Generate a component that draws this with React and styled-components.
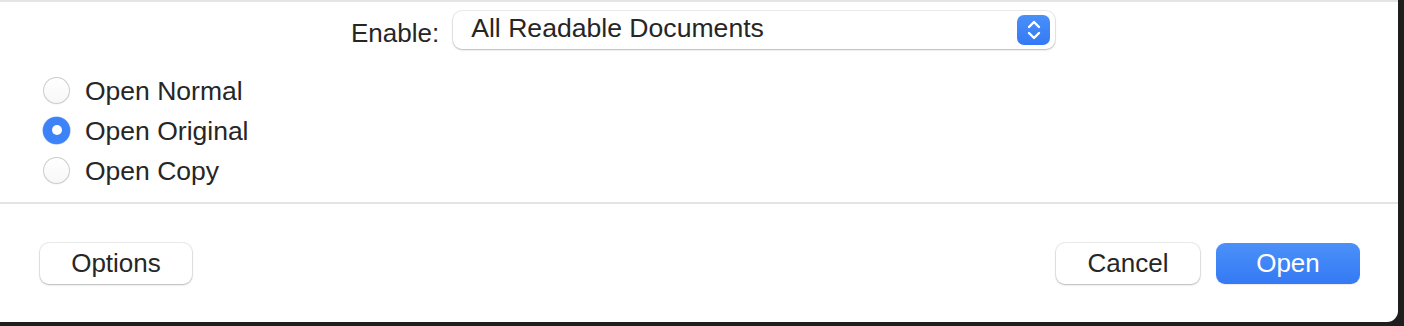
import React, { useState } from 'react';
import styled, { createGlobalStyle } from 'styled-components';

const GlobalStyle = createGlobalStyle`
  html, body {
    margin: 0;
    padding: 0;
    background: #1e1e1e;
  }
  body {
    font-family: "Liberation Sans", Arial, sans-serif;
    color: #262626;
  }
`;

const Sheet = styled.div`
  width: 1398px;
  height: 322px;
  background: #ffffff;
  border-top: 2px solid #e4e4e4;
  border-bottom-right-radius: 11px;
  box-sizing: border-box;
  display: flex;
  flex-direction: column;
  overflow: hidden;
`;

const FormatRow = styled.div`
  display: flex;
  align-items: center;
  gap: 14px;
  padding-left: 351px;
  margin-top: 9px;
  height: 38px;
`;

const Label = styled.span`
  font-size: 26px;
  line-height: 26px;
  margin-top: 6px;
`;

const Popup = styled.div`
  width: 602px;
  height: 38px;
  box-sizing: border-box;
  border-radius: 9px;
  background: #fff;
  box-shadow: 0 0 0 1px rgba(0, 0, 0, 0.07), 0 1px 2px rgba(0, 0, 0, 0.22);
  display: flex;
  align-items: center;
  justify-content: space-between;
  padding: 0 5px 0 18px;
  font-size: 26.6px;
`;

const PopupText = styled.span`
  margin-top: -3px;
`;

const Stepper = styled.div`
  width: 33px;
  height: 30px;
  border-radius: 7px;
  background: linear-gradient(#4a90f8, #3479f5);
  display: flex;
  align-items: center;
  justify-content: center;
`;

const Choices = styled.div`
  display: flex;
  flex-direction: column;
  padding-left: 43px;
  margin-top: 22px;
`;

const Choice = styled.label`
  display: flex;
  align-items: center;
  gap: 15px;
  height: 40px;
  font-size: 26.5px;
  cursor: default;
`;

const Dot = styled.span`
  width: 27px;
  height: 27px;
  border-radius: 50%;
  box-sizing: border-box;
  flex-shrink: 0;
  margin-top: -2px;
  display: flex;
  align-items: center;
  justify-content: center;
  background: ${(p) => (p.$on ? '#3c83f7' : 'linear-gradient(#ffffff, #f7f7f7)')};
  box-shadow: ${(p) =>
    p.$on
      ? '0 0 0 0.5px rgba(40, 110, 240, 0.6)'
      : 'inset 0 0 0 1px #cdcdcd, 0 0.5px 1px rgba(0, 0, 0, 0.08)'};

  &::after {
    content: '';
    display: ${(p) => (p.$on ? 'block' : 'none')};
    width: 10px;
    height: 10px;
    border-radius: 50%;
    background: #fff;
  }
`;

const Divider = styled.div`
  height: 2px;
  background: #e4e4e4;
  margin-top: 11px;
`;

const Footer = styled.div`
  display: flex;
  align-items: flex-start;
  padding: 39px 38px 0 40px;
  flex: 1;
`;

const Spacer = styled.div`
  flex: 1;
`;

const Actions = styled.div`
  display: flex;
  gap: 16px;
`;

const Button = styled.button`
  width: ${(p) => p.$w}px;
  height: 41px;
  border: none;
  border-radius: 9px;
  font-family: "Liberation Sans", Arial, sans-serif;
  font-size: 26px;
  padding: 0;
  color: ${(p) => (p.$primary ? '#ffffff' : '#262626')};
  background: ${(p) => (p.$primary ? 'linear-gradient(#4b91f8, #3579f5)' : '#ffffff')};
  box-shadow: ${(p) =>
    p.$primary
      ? '0 1px 1px rgba(0, 0, 0, 0.08)'
      : '0 0 0 1px rgba(0, 0, 0, 0.08), 0 1px 2px rgba(0, 0, 0, 0.22)'};
`;

const Chevrons = () => (
  <svg width="16" height="22" viewBox="0 0 16 22" fill="none">
    <path d="M3 8 L8 3 L13 8" stroke="#fff" strokeWidth="2.4" strokeLinecap="round" strokeLinejoin="round" />
    <path d="M3 14 L8 19 L13 14" stroke="#fff" strokeWidth="2.4" strokeLinecap="round" strokeLinejoin="round" />
  </svg>
);

const options = ['Open Normal', 'Open Original', 'Open Copy'];

const App = () => {
  const [mode, setMode] = useState('Open Original');

  return (
    <>
      <GlobalStyle />
      <Sheet>
        <FormatRow>
          <Label>Enable:</Label>
          <Popup>
            <PopupText>All Readable Documents</PopupText>
            <Stepper>
              <Chevrons />
            </Stepper>
          </Popup>
        </FormatRow>

        <Choices>
          {options.map((o) => (
            <Choice key={o} onClick={() => setMode(o)}>
              <Dot $on={mode === o} />
              {o}
            </Choice>
          ))}
        </Choices>

        <Divider />

        <Footer>
          <Button $w={152}>Options</Button>
          <Spacer />
          <Actions>
            <Button $w={144}>Cancel</Button>
            <Button $w={144} $primary>Open</Button>
          </Actions>
        </Footer>
      </Sheet>
    </>
  );
};

export default App;
